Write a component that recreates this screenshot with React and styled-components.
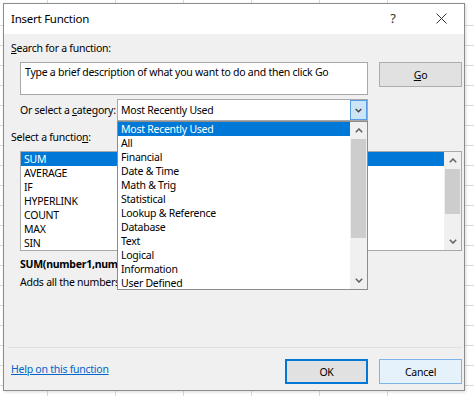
import React from "react";
import styled, { createGlobalStyle } from "styled-components";

const Global = createGlobalStyle`
  html, body { margin: 0; padding: 0; }
  body {
    width: 474px; height: 396px; overflow: hidden;
    font-family: "Noto Sans", "Open Sans", sans-serif;
    background-color: #ffffff;
    background-image:
      repeating-linear-gradient(to bottom, transparent 0 19px, #d9d9d9 19px 20px),
      repeating-linear-gradient(to right, transparent 0 67px, #d9d9d9 67px 68px);
    background-position: 0 6px, -20px 0;
  }
`;

const Dialog = styled.div`
  position: relative;
  margin: 3px 0 0 3px;
  width: 462px;
  height: 388px;
  box-sizing: border-box;
  border: 1px solid #8c8c8c;
  background: #f0f0f0;
  display: flex;
  flex-direction: column;
  box-shadow: 1px 1px 3px rgba(0,0,0,0.15);
  font-size: 10.5px;
  letter-spacing: -0.25px;
  color: #000;
`;

const TitleBar = styled.div`
  height: 30px;
  background: #fff;
  display: flex;
  align-items: center;
  padding-left: 7px;
  flex-shrink: 0;
`;

const Title = styled.div`
  flex: 1;
  font-size: 11.5px;
  margin-top: -2px;
`;

const TitleBtn = styled.div`
  width: ${(p) => p.w}px;
  height: 30px;
  display: flex;
  align-items: center;
  justify-content: center;
  font-size: 13px;
  color: #333;
  margin-top: -2px;
`;

const Body = styled.div`
  flex: 1;
  display: flex;
  flex-direction: column;
  padding: 0 0 0 7px;
`;

const Label = styled.div`
  height: 16px;
  line-height: 16px;
  margin-top: ${(p) => p.mt || 0}px;
  white-space: nowrap;
`;

const U = styled.span`
  text-decoration: underline;
  text-underline-offset: 1px;
`;

const SearchRow = styled.div`
  display: flex;
  gap: 11px;
  margin: 6px 0 0 9px;
  align-items: flex-start;
`;

const SearchBox = styled.div`
  width: 348px;
  height: 33px;
  box-sizing: border-box;
  border: 1px solid #a8a8a8;
  background: #fff;
  padding: 2px 0 0 4px;
  line-height: 15px;
  white-space: nowrap;
  overflow: hidden;
`;

const Button = styled.div`
  width: 83px;
  height: 25px;
  box-sizing: border-box;
  display: flex;
  align-items: center;
  justify-content: center;
  background: ${(p) => (p.hover ? "#e5f1fb" : "#e1e1e1")};
  border: 1px solid ${(p) => (p.def ? "#0078d7" : p.hover ? "#7eb4ea" : "#adadad")};
  box-shadow: ${(p) => (p.def ? "inset 0 0 0 1px #0078d7" : "none")};
  color: #000;
`;

const CategoryRow = styled.div`
  display: flex;
  align-items: center;
  margin: 4px 0 0 9px;
  height: 22px;
`;

const CatLabel = styled.div`
  width: 97px;
  white-space: nowrap;
`;

const Combo = styled.div`
  position: relative;
  width: 251px;
  height: 22px;
  box-sizing: border-box;
  border: 1px solid #a8a8a8;
  background: #fff;
  display: flex;
  align-items: center;
  padding-left: 3px;
`;

const ComboText = styled.div`
  flex: 1;
`;

const ComboArrow = styled.div`
  width: 17px;
  height: 20px;
  box-sizing: border-box;
  background: #cce4f7;
  border: 1px solid #569de5;
  display: flex;
  align-items: center;
  justify-content: center;
`;

const DropList = styled.div`
  position: absolute;
  left: -1px;
  top: 21px;
  width: 251px;
  height: 169px;
  box-sizing: border-box;
  border: 1px solid #8c8c8c;
  background: #fff;
  display: flex;
  z-index: 5;
`;

const Items = styled.div`
  flex: 1;
  display: flex;
  flex-direction: column;
  min-width: 0;
`;

const Item = styled.div`
  height: 14px;
  line-height: 14px;
  padding-left: ${(p) => p.pl}px;
  white-space: nowrap;
  background: ${(p) => (p.sel ? "#0078d7" : "transparent")};
  color: ${(p) => (p.sel ? "#fff" : "#000")};
`;

const ScrollBar = styled.div`
  width: 17px;
  background: #f0f0f0;
  display: flex;
  flex-direction: column;
  flex-shrink: 0;
`;

const ScrollBtn = styled.div`
  height: 17px;
  display: flex;
  align-items: center;
  justify-content: center;
  flex-shrink: 0;
`;

const Track = styled.div`
  flex: 1;
  display: flex;
  flex-direction: column;
  padding: 0 1px;
`;

const Thumb = styled.div`
  height: ${(p) => p.h}px;
  background: #cdcdcd;
`;

const FuncList = styled.div`
  margin: 6px 0 0 9px;
  width: 442px;
  height: 100px;
  box-sizing: border-box;
  border: 1px solid #a8a8a8;
  background: #fff;
  display: flex;
`;

const Signature = styled.div`
  margin: 5px 0 0 9px;
  height: 16px;
  line-height: 16px;
  font-weight: 700;
  white-space: nowrap;
`;

const Desc = styled.div`
  margin: 2px 0 0 9px;
  height: 16px;
  line-height: 16px;
  white-space: nowrap;
`;

const Separator = styled.div`
  margin: auto 2px 0 -3px;
  height: 1px;
  background: #dfdfdf;
`;

const Footer = styled.div`
  display: flex;
  align-items: flex-start;
  height: 42px;
  padding: 11px 2px 0 0;
  box-sizing: border-box;
  gap: 11px;
`;

const HelpLink = styled.a`
  flex: 1;
  color: #0066cc;
  text-decoration: underline;
  line-height: 16px;
  margin-top: 2px;
`;

const Chevron = ({ up, color = "#606060", w = 8 }) => (
  <svg width={w} height="5" viewBox="0 0 8 5">
    <polyline
      points={up ? "0.8,4.2 4,1 7.2,4.2" : "0.8,0.8 4,4 7.2,0.8"}
      fill="none"
      stroke={color}
      strokeWidth="1.5"
    />
  </svg>
);

const categories = [
  "Most Recently Used",
  "All",
  "Financial",
  "Date & Time",
  "Math & Trig",
  "Statistical",
  "Lookup & Reference",
  "Database",
  "Text",
  "Logical",
  "Information",
  "User Defined",
];

const functions = ["SUM", "AVERAGE", "IF", "HYPERLINK", "COUNT", "MAX", "SIN"];

export default function App() {
  return (
    <>
      <Global />
      <Dialog>
        <TitleBar>
          <Title>Insert Function</Title>
          <TitleBtn w={50}>?</TitleBtn>
          <TitleBtn w={46}>
            <svg width="11" height="11" viewBox="0 0 11 11">
              <path d="M0.5 0.5 L10.5 10.5 M10.5 0.5 L0.5 10.5" stroke="#333" strokeWidth="1" />
            </svg>
          </TitleBtn>
        </TitleBar>
        <Body>
          <Label mt={6}>
            <U>S</U>earch for a function:
          </Label>
          <SearchRow>
            <SearchBox>Type a brief description of what you want to do and then click Go</SearchBox>
            <Button>
              <U>G</U>o
            </Button>
          </SearchRow>
          <CategoryRow>
            <CatLabel>
              Or select a <U>c</U>ategory:
            </CatLabel>
            <Combo>
              <ComboText>Most Recently Used</ComboText>
              <ComboArrow>
                <Chevron w={7} color="#444" />
              </ComboArrow>
              <DropList>
                <Items>
                  {categories.map((c, i) => (
                    <Item key={c} sel={i === 0} pl={3}>
                      {c}
                    </Item>
                  ))}
                </Items>
                <ScrollBar>
                  <ScrollBtn>
                    <Chevron up />
                  </ScrollBtn>
                  <Track>
                    <Thumb h={99} />
                  </Track>
                  <ScrollBtn>
                    <Chevron />
                  </ScrollBtn>
                </ScrollBar>
              </DropList>
            </Combo>
          </CategoryRow>
          <Label mt={8}>
            Select a functio<U>n</U>:
          </Label>
          <FuncList>
            <Items>
              {functions.map((f, i) => (
                <Item key={f} sel={i === 0} pl={3}>
                  {f}
                </Item>
              ))}
            </Items>
            <ScrollBar>
              <ScrollBtn>
                <Chevron up />
              </ScrollBtn>
              <Track>
                <Thumb h={45} />
              </Track>
              <ScrollBtn>
                <Chevron />
              </ScrollBtn>
            </ScrollBar>
          </FuncList>
          <Signature>SUM(number1,number2,...)</Signature>
          <Desc>Adds all the numbers in a range of cells.</Desc>
          <Separator />
          <Footer>
            <HelpLink href="#">Help on this function</HelpLink>
            <Button def>OK</Button>
            <Button hover>Cancel</Button>
          </Footer>
        </Body>
      </Dialog>
    </>
  );
}
